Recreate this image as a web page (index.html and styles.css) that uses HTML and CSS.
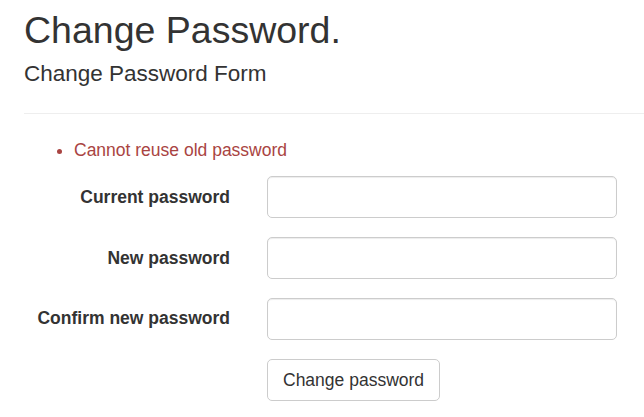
FILE: index.html
```html
<!DOCTYPE html>
<html lang="en">
<head>
<meta charset="utf-8">
<title>Change Password</title>
<link rel="stylesheet" href="styles.css">
</head>
<body>
<div class="page">
  <h1 class="title">Change Password.</h1>
  <h4 class="subtitle">Change Password Form</h4>
  <hr class="rule">
  <ul class="errors">
    <li>Cannot reuse old password</li>
  </ul>
  <form class="form">
    <div class="group">
      <label class="label" for="cur">Current password</label>
      <input class="input" id="cur" type="password">
    </div>
    <div class="group">
      <label class="label" for="new">New password</label>
      <input class="input" id="new" type="password">
    </div>
    <div class="group">
      <label class="label" for="conf">Confirm new password</label>
      <input class="input" id="conf" type="password">
    </div>
    <div class="group group-last">
      <div class="label-spacer"></div>
      <button class="btn" type="button">Change password</button>
    </div>
  </form>
</div>
</body>
</html>
```

FILE: styles.css
```css
* { box-sizing: border-box; }
html, body { margin: 0; padding: 0; background: #fff; }
body {
  font-family: "Liberation Sans", Arial, sans-serif;
  font-size: 17.5px;
  line-height: 25px;
  color: #333;
}
.page {
  padding: 10px 0 0 24px;
}
.title {
  margin: 0;
  font-size: 37.5px;
  line-height: 41.25px;
  font-weight: 500;
}
.subtitle {
  margin: 11px 0 0 0;
  font-size: 22.5px;
  line-height: 24.75px;
  font-weight: 500;
}
.rule {
  margin: 26px 0 0 0;
  border: 0;
  border-top: 1px solid #eee;
  height: 0;
}
.errors {
  margin: 24px 0 0 0;
  padding-left: 50px;
  color: #a94442;
}
.form {
  margin-top: 13px;
}
.group {
  display: flex;
  align-items: flex-start;
  gap: 37px;
  margin-bottom: 18.75px;
}
.group-last {
  padding-top: 1px;
}
.label, .label-spacer {
  width: 206px;
  flex: none;
  text-align: right;
  font-weight: bold;
  padding-top: 8.75px;
  line-height: 25px;
}
.label-spacer { padding: 0; }
.input {
  width: 350px;
  height: 42px;
  border: 1px solid #ccc;
  border-radius: 5px;
  box-shadow: inset 0 1px 1px rgba(0,0,0,0.075);
  background: #fff;
  font: inherit;
  padding: 7.5px 15px;
}
.btn {
  height: 42px;
  padding: 7.5px 15px;
  border: 1px solid #ccc;
  border-radius: 5px;
  background: #fff;
  color: #333;
  font-family: inherit;
  font-size: 17.5px;
  line-height: 25px;
}
```
